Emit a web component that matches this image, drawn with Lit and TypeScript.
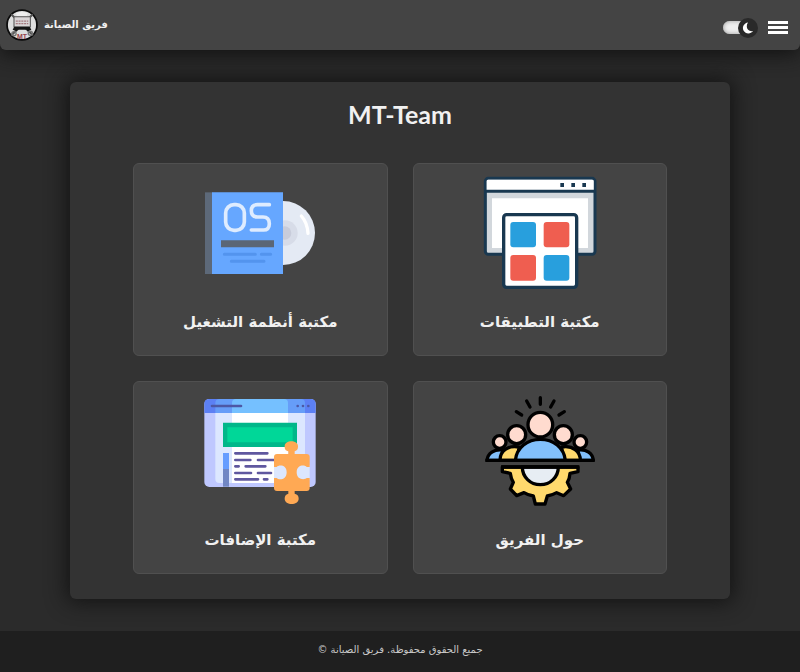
import { LitElement, html, css, svg } from "lit";
import { customElement, property, state } from "lit/decorators.js";

const appsIcon = svg`<svg viewBox="0 15 420 390" aria-hidden="true">
  <rect x="46" y="40" width="329" height="228" rx="9" fill="#d2d7dc" stroke="#193850" stroke-width="9"/>
  <path d="M66 100H354V249H66Z" fill="#fff"/>
  <path d="M50 48Q50 44 54 44H367Q371 44 371 48V75H50Z" fill="#fff"/>
  <path d="M46 79H375" stroke="#193850" stroke-width="9"/>
  <path d="M271 54h11v12h-11zM304 54h11v12h-11zM337 54h11v12h-11z" fill="#193850"/>
  <rect x="101" y="149" width="219" height="218" rx="9" fill="#fff" stroke="#193850" stroke-width="10"/>
  <rect x="121" y="171" width="77" height="76" rx="9" fill="#289fdd"/>
  <rect x="221" y="171" width="77" height="76" rx="9" fill="#ef5e50"/>
  <rect x="121" y="270" width="77" height="77" rx="9" fill="#ef5e50"/>
  <rect x="221" y="270" width="77" height="77" rx="9" fill="#289fdd"/>
</svg>`;

const osIcon = svg`<svg viewBox="0 -30 420 390" aria-hidden="true">
  <circle cx="279" cy="159" r="96" fill="#e4eaf4"/>
  <circle cx="285" cy="159" r="38" fill="#d7dce8"/>
  <circle cx="284" cy="159" r="20" fill="#c8ccda"/>
  <path d="M334 108Q352 128 354 160" fill="none" stroke="#fff" stroke-width="10" stroke-linecap="round"/>
  <path d="M45 37H67V282H45Z" fill="#5d6979"/>
  <path d="M66 37H279V282H66Z" fill="#66a7ff"/>
  <rect x="107" y="74" width="56" height="77" rx="25" fill="none" stroke="#deecff" stroke-width="11"/>
  <path d="M238 74H202Q184 74 184 92T202 111H219Q238 111 238 131T219 150H184" fill="none" stroke="#deecff" stroke-width="11" stroke-linecap="round"/>
  <path d="M93 181H252V202H93Z" fill="#5b6675"/>
  <path d="M103 223H196M214 223H242M124 244H222" stroke="#5394ee" stroke-width="9" stroke-linecap="round"/>
</svg>`;

const addonsIcon = svg`<svg viewBox="0 9 420 390" aria-hidden="true">
  <rect x="43" y="42" width="334" height="264" rx="15" fill="#bfc8ff"/>
  <path d="M76 83H345V282Q345 294 333 294H88Q76 294 76 282Z" fill="#dce7ff"/>
  <path d="M126 83H294V294H126Z" fill="#fff"/>
  <path d="M43 84V57Q43 42 58 42H362Q377 42 377 57V84Z" fill="#5c80f4"/>
  <path d="M76 84V54Q76 42 88 42H333Q345 42 345 54V84Z" fill="#669df8"/>
  <path d="M126 84V54Q126 42 138 42H282Q294 42 294 54V84Z" fill="#75c0ff"/>
  <path d="M66 63H153" stroke="#4d58a5" stroke-width="8" stroke-linecap="round"/>
  <circle cx="323" cy="63" r="4" fill="#4d58a5"/><circle cx="339" cy="63" r="4" fill="#4d58a5"/><circle cx="355" cy="63" r="4" fill="#4d58a5"/>
  <path d="M99 113H321V186H99Z" fill="#00b78a"/>
  <path d="M112 127H308V172H112Z" fill="#00d798"/>
  <path d="M99 204H117V255H99Z" fill="#669dff"/><path d="M99 252H117V305H99Z" fill="#7187c4"/>
  <path d="M136 205H232M136 225H181M204 225H256M136 244H146M167 244H226M136 264H183M204 264H243M136 283H204M222 283H232" stroke="#5f579f" stroke-width="8" stroke-linecap="round"/>
  <path d="M252 239H300V286H252ZM312 239H359V286H312Z" fill="#dce7ff"/>
  <path d="M261 207H295V199C286 197 284 193 284 184C284 164 324 164 324 184C324 193 322 197 314 199V207H350Q359 207 359 216V246H350C345 239 320 238 320 262C320 286 345 285 350 279H359V309Q359 318 350 318H314V326C323 328 326 333 326 341C326 362 284 362 284 341C284 333 287 328 295 326V318H261Q252 318 252 309V279H260C266 286 290 286 290 262C290 238 266 239 260 246H252V216Q252 207 261 207Z" fill="#ffa954"/>
</svg>`;

const teamIcon = svg`<svg viewBox="0 9 420 390" aria-hidden="true">
  <g stroke="#000" stroke-width="10" stroke-linejoin="round">
    <path d="M51 226C53 204 73 192 97 195V226ZM325 195C349 192 368 204 370 226H325Z" fill="#82c0fb"/>
    <path d="M90 226C90 197 114 181 146 186V226ZM276 186C308 181 331 198 331 226H276Z" fill="#ffd96d"/>
    <circle cx="89" cy="171" r="19" fill="#ffdbcf"/><circle cx="331" cy="171" r="19" fill="#ffdbcf"/>
    <circle cx="140" cy="149" r="27" fill="#ffdbcf"/><circle cx="280" cy="149" r="27" fill="#ffdbcf"/>
    <path d="M136 226C140 188 172 163 211 163S282 188 286 226Z" fill="#82c0fb"/>
    <circle cx="211" cy="119" r="37" fill="#ffdbcf"/>
    <path d="M46 226H374" fill="none"/>
    <path d="M97 246H324V260L300 265Q299 281 292 292L302 312L281 332L260 323Q246 331 232 333L225 357H196L190 333Q175 331 162 323L140 332L121 312L130 292Q123 281 121 265L97 260Z" fill="#ffd96d"/>
    <path d="M157 246C157 276 181 299 211 299S265 276 265 246Z" fill="#e7edf3"/>
    <path d="M93 246H328" fill="none"/>
  </g>
  <path d="M211 38V58M170 48L180 66M252 48L242 66M139 80L155 90M283 80L267 90" stroke="#000" stroke-width="10" stroke-linecap="round"/>
</svg>`;

const logoIcon = svg`<svg class="logo" viewBox="0 0 92 92" aria-hidden="true">
  <circle cx="46" cy="46" r="43" fill="#dedede" stroke="#0b0b0b" stroke-width="5"/>
  <path d="M17 17L76 74M75 17L17 74" stroke="#555" stroke-width="6" stroke-linecap="round"/>
  <path d="M23 22H70V52H23Z" fill="#d9d5d6" stroke="#555" stroke-width="3"/>
  <path d="M29 12Q45 5 62 12L60 20H31Z" fill="#eee"/>
  <path d="M28 35H64M28 42H64" stroke="#a47b80" stroke-width="4" stroke-dasharray="6 2"/>
  <path d="M24 51H68L73 60L62 64L59 60H34L31 64L19 60Z" fill="#151515"/>
  <circle cx="23" cy="71" r="6" fill="none" stroke="#777" stroke-width="4"/><circle cx="70" cy="70" r="6" fill="none" stroke="#777" stroke-width="4"/>
  <text x="46" y="85" text-anchor="middle" class="mark">MT</text>
</svg>`;

@customElement("library-card")
class LibraryCard extends LitElement {
  @property() label = "";
  @property({ attribute: false }) icon: unknown;

  static styles = css`
    :host { display: block; min-width: 0; }
    .card {
      display: flex;
      flex-direction: column;
      align-items: center;
      gap: 8px;
      padding: 6px 8px 19px;
      border: 1px solid #505050;
      border-radius: 6px;
      background: #444;
      color: #f1f1f1;
      text-decoration: none;
    }
    svg { display: block; width: 140px; max-width: 100%; height: 130px; }
    .label { font-size: 15px; line-height: 28px; font-weight: 700; text-align: center; }
  `;

  render() {
    return html`<a class="card" href="#">${this.icon}<span class="label">${this.label}</span></a>`;
  }
}

@customElement("app-root")
class AppRoot extends LitElement {
  @state() private dark = true;

  static styles = css`
    :host {
      display: flex;
      flex-direction: column;
      min-height: 100vh;
      direction: rtl;
      background: #2b2b2b;
      color: #f1f1f1;
      font-family: "DejaVu Sans", sans-serif;
    }
    header {
      display: flex;
      justify-content: space-between;
      align-items: center;
      box-sizing: border-box;
      height: 50px;
      padding: 0 12px 0 6px;
      border-radius: 0 0 6px 6px;
      background: #444;
      box-shadow: 0 4px 20px #111;
    }
    .controls, .brand { display: flex; align-items: center; }
    .controls { gap: 10px; padding-top: 5px; }
    .brand { gap: 6px; color: inherit; text-decoration: none; font-size: 10px; line-height: 16px; font-weight: 700; }
    .logo { width: 32px; height: 32px; }
    .mark { font: 700 20px "Liberation Sans", sans-serif; fill: #98434b; }
    .menu {
      display: flex;
      flex-direction: column;
      justify-content: space-between;
      width: 20px;
      height: 13px;
      padding: 0;
      border: 0;
      background: none;
    }
    .bar { height: 3px; background: #fff; }
    .switch { display: flex; align-items: center; direction: ltr; }
    .switch input {
      appearance: none;
      width: 24px;
      height: 13px;
      margin: 0;
      border-radius: 7px;
      background: #eee;
      box-shadow: inset 0 0 4px #999;
    }
    .knob { width: 20px; height: 20px; margin-left: -9px; border-radius: 50%; background: #292929; }
    main {
      box-sizing: border-box;
      width: calc(100% - 32px);
      max-width: 660px;
      margin: 32px auto;
      padding: 16px 63px 25px;
      border-radius: 6px;
      background: #333;
      box-shadow: 0 0 20px 4px #151515;
    }
    h1 {
      margin: 0 0 33px;
      font: 700 25px/32px Lato, sans-serif;
      text-align: center;
    }
    .cards { display: grid; grid-template-columns: repeat(auto-fit, minmax(200px, 1fr)); gap: 25px; }
    footer {
      margin-top: auto;
      padding: 8px 10px 12px;
      background: #1f1f1f;
      color: #c8c8c8;
      font-size: 10px;
      line-height: 21px;
      text-align: center;
    }
  `;

  render() {
    return html`
      <header>
        <div class="controls">
          <button class="menu" aria-label="القائمة"><span class="bar"></span><span class="bar"></span><span class="bar"></span></button>
          <label class="switch">
            <input type="checkbox" aria-label="الوضع الداكن" .checked=${this.dark} @change=${() => (this.dark = !this.dark)} />
            <svg class="knob" viewBox="0 0 20 20" aria-hidden="true"><path d="M10 4.5A5.5 5.5 0 1 0 15 13C10 14 7 9 10 4.5Z" fill="#fff"/></svg>
          </label>
        </div>
        <a class="brand" href="#"><span>فريق الصيانة</span>${logoIcon}</a>
      </header>
      <main>
        <h1>MT-Team</h1>
        <div class="cards">
          <library-card label="مكتبة التطبيقات" .icon=${appsIcon}></library-card>
          <library-card label="مكتبة أنظمة التشغيل" .icon=${osIcon}></library-card>
          <library-card label="حول الفريق" .icon=${teamIcon}></library-card>
          <library-card label="مكتبة الإضافات" .icon=${addonsIcon}></library-card>
        </div>
      </main>
      <footer>جميع الحقوق محفوظة. فريق الصيانة ©</footer>
    `;
  }
}
